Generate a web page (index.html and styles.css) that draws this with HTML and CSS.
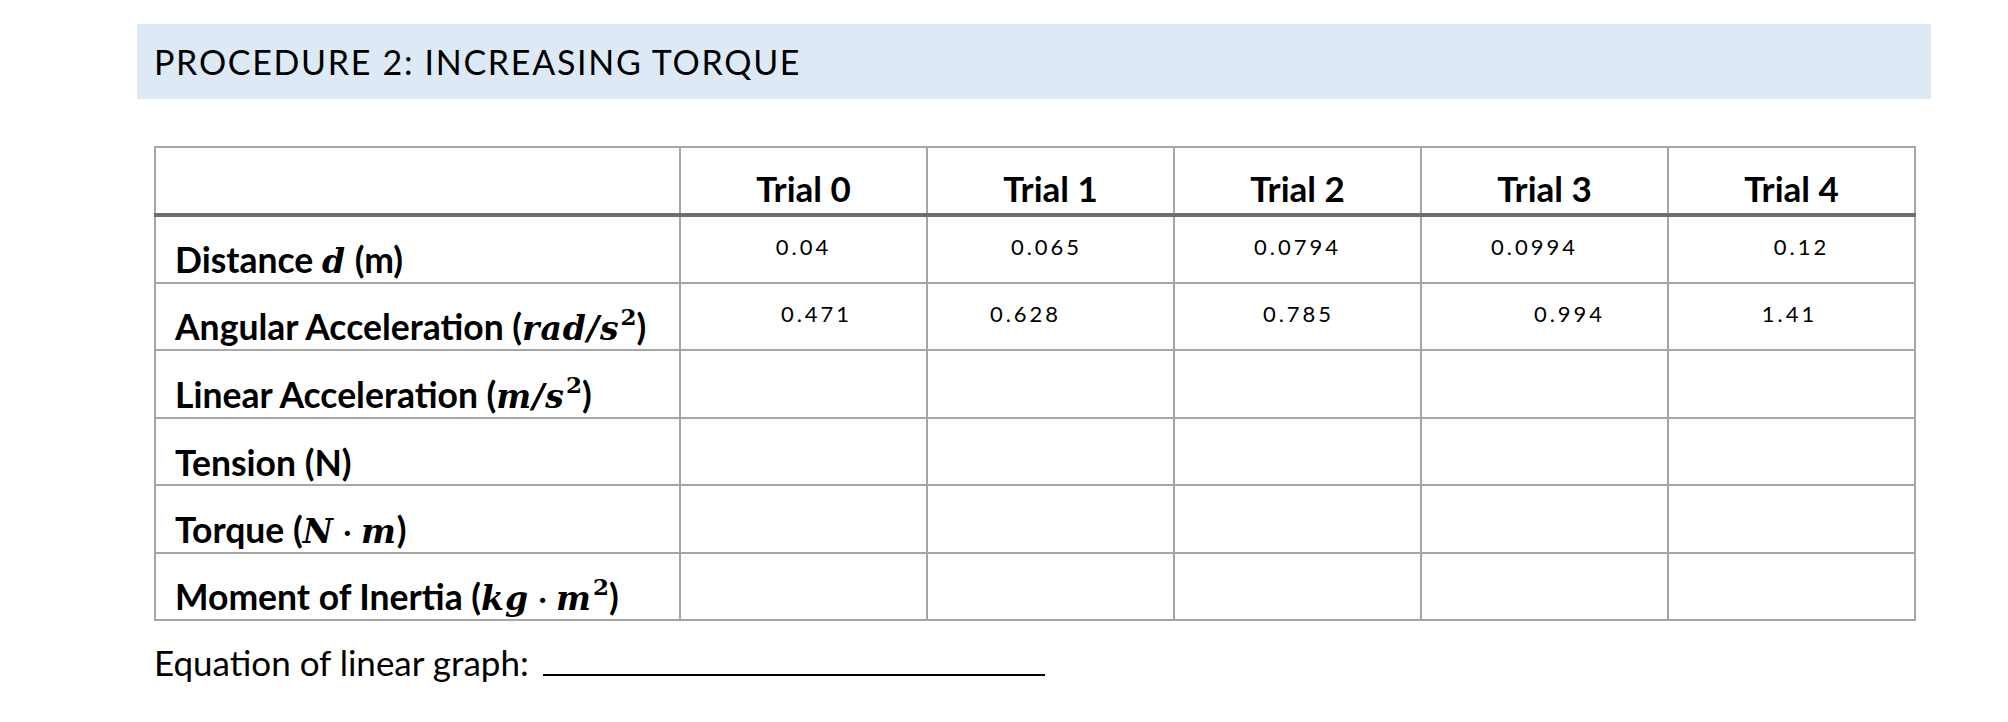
FILE: index.html
```html
<!DOCTYPE html>
<html>
<head>
<meta charset="utf-8">
<link rel="stylesheet" href="styles.css">
</head>
<body>
<div class="page">
  <div class="band"><h2 class="title">PROCEDURE 2: INCREASING TORQUE</h2></div>
  <table class="grid">
    <colgroup><col class="c-label"><col class="c-trial"><col class="c-trial"><col class="c-trial"><col class="c-trial"><col class="c-trial"></colgroup>
    <thead>
      <tr class="head">
        <th></th><th>Trial 0</th><th>Trial 1</th><th>Trial 2</th><th>Trial 3</th><th>Trial 4</th>
      </tr>
    </thead>
    <tbody>
      <tr>
        <td class="lbl">Distance <span class="m">d</span> (m)</td>
        <td class="val"><span class="v" style="--dx:0px">0.04</span></td>
        <td class="val"><span class="v" style="--dx:-4px">0.065</span></td>
        <td class="val"><span class="v" style="--dx:0px">0.0794</span></td>
        <td class="val"><span class="v" style="--dx:-10px">0.0994</span></td>
        <td class="val"><span class="v" style="--dx:10px">0.12</span></td>
      </tr>
      <tr>
        <td class="lbl">Angular Acceleration (<span class="m">rad</span><span class="m">/</span><span class="m">s</span><sup class="sq">2</sup>)</td>
        <td class="val"><span class="v" style="--dx:13px">0.471</span></td>
        <td class="val"><span class="v" style="--dx:-25px">0.628</span></td>
        <td class="val"><span class="v" style="--dx:1px">0.785</span></td>
        <td class="val"><span class="v" style="--dx:25px">0.994</span></td>
        <td class="val"><span class="v" style="--dx:-2px">1.41</span></td>
      </tr>
      <tr>
        <td class="lbl">Linear Acceleration (<span class="m">m</span><span class="m">/</span><span class="m">s</span><sup class="sq">2</sup>)</td>
        <td></td><td></td><td></td><td></td><td></td>
      </tr>
      <tr>
        <td class="lbl">Tension (N)</td>
        <td></td><td></td><td></td><td></td><td></td>
      </tr>
      <tr>
        <td class="lbl">Torque (<span class="m">N</span> <span class="dot">·</span> <span class="m">m</span>)</td>
        <td></td><td></td><td></td><td></td><td></td>
      </tr>
      <tr>
        <td class="lbl">Moment of Inertia (<span class="m">kg</span> <span class="dot">·</span> <span class="m">m</span><sup class="sq">2</sup>)</td>
        <td></td><td></td><td></td><td></td><td></td>
      </tr>
    </tbody>
  </table>
  <p class="eq">Equation of linear graph: <span class="blank"></span></p>
</div>
</body>
</html>
```
FILE: styles.css
```css
html, body {
  margin: 0;
  padding: 0;
  background: #ffffff;
}
.page {
  padding: 24px 0 0 137px;
  font-family: "Lato", "Liberation Sans", sans-serif;
  color: #000;
}
.band {
  width: 1794px;
  height: 75px;
  background: #dde9f5;
  display: flex;
  align-items: center;
  box-sizing: border-box;
  padding-left: 17px;
}
.title {
  margin: 0;
  font-family: "Lato", "Liberation Sans", sans-serif;
  font-weight: 400;
  font-size: 34px;
  letter-spacing: 1.7px;
  line-height: 1;
  padding-top: 1px;
}
.grid {
  margin: 47px 0 0 17px;
  border-collapse: collapse;
  table-layout: fixed;
  width: 1760px;
}
.c-label { width: 525px; }
.c-trial { width: 247px; }
.grid th, .grid td {
  border: 2px solid #a6a6a6;
  padding: 0;
}
.head th {
  height: 68px;
  border-bottom: 4px solid #6e6e6e;
  font-weight: 700;
  font-size: 35px;
  text-align: center;
  vertical-align: bottom;
  line-height: 1;
  padding-bottom: 7px;
  box-sizing: border-box;
}
.grid tbody td {
  height: 67.5px;
  box-sizing: border-box;
}
.lbl {
  font-weight: 700;
  font-size: 35.5px;
  vertical-align: bottom;
  line-height: 1;
  padding: 0 0 4px 19px !important;
  white-space: nowrap;
}
.m {
  font-family: "DejaVu Serif", "Liberation Serif", serif;
  font-style: italic;
  font-weight: 700;
  font-size: 33px;
  letter-spacing: 1px;
}
.dot {
  font-family: "DejaVu Serif", serif;
  font-weight: 700;
  font-size: 28px;
}
.sq {
  font-family: "DejaVu Serif", serif;
  font-weight: 700;
  font-size: 23px;
  line-height: 0;
  vertical-align: 15px;
  margin-left: 1px;
}
.val {
  vertical-align: top;
  text-align: center;
  padding-top: 19px !important;
}
.v {
  display: inline-block;
  font-family: "Lato", "DejaVu Sans", sans-serif;
  font-weight: 400;
  font-size: 22px;
  letter-spacing: 3px;
  line-height: 1;
  padding-left: calc(var(--dx) * 2);
}
.v[style*="--dx:-"] {
  padding-left: 0;
  padding-right: calc(var(--dx) * -2);
}
.eq {
  margin: 20px 0 0 17px;
  font-size: 35px;
  font-weight: 400;
  line-height: 1.2;
  display: flex;
  align-items: baseline;
  gap: 14px;
}
.blank {
  display: inline-block;
  width: 502px;
  border-bottom: 2px solid #000;
}
```
